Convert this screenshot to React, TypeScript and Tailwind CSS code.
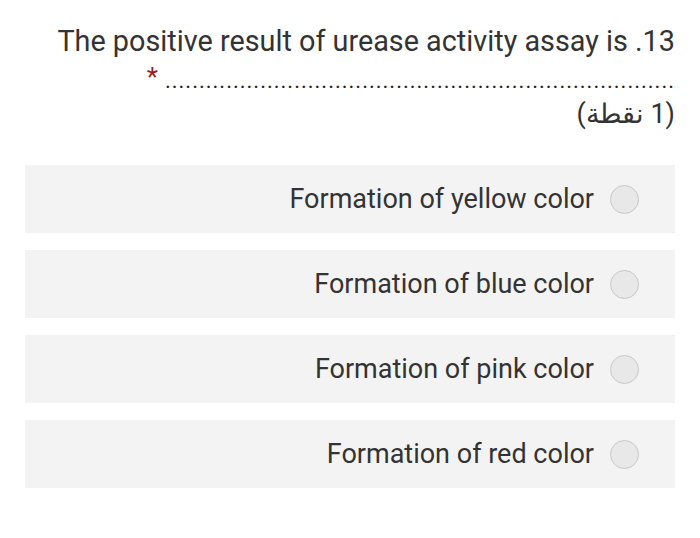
const options = [
  "Formation of yellow color",
  "Formation of blue color",
  "Formation of pink color",
  "Formation of red color",
];

const dots = ".".repeat(75);

function Radio() {
  return (
    <span className="block w-[29px] h-[29px] rounded-full bg-[#e8e8e8] border-[1.5px] border-[#c8c8c8] shrink-0" />
  );
}

export default function App() {
  return (
    <div
      className="w-[700px] h-[538px] bg-white text-[#333333] overflow-hidden"
      style={{ fontFamily: "Roboto, 'Noto Sans', sans-serif" }}
    >
      {/* Question header */}
      <div className="pr-[25px] pt-[22px] flex flex-col items-end">
        <div className="text-[28.8px] leading-[38px]">
          The positive result of urease activity assay is .13
        </div>
        <div className="flex items-start justify-end gap-[7px] h-[34px]">
          <span className="text-[#9b1c1c] text-[26px] leading-[26px] mt-[4px]">*</span>
          <span className="whitespace-nowrap text-[22px] leading-[22px] tracking-[1px] mt-[10px] text-[#222]">
            {dots}
          </span>
        </div>
        <div className="text-[27px] leading-[36px] mt-[2px]" dir="rtl">
          (1 نقطة)
        </div>
      </div>

      {/* Options */}
      <div className="mt-[33px] flex flex-col gap-[17px] px-[25px]">
        {options.map((opt) => (
          <div
            key={opt}
            className="h-[68px] bg-[#f3f3f3] flex items-center justify-end pr-[36px] gap-[16px]"
          >
            <span className="text-[27px] leading-[32px]">{opt}</span>
            <Radio />
          </div>
        ))}
      </div>
    </div>
  );
}
